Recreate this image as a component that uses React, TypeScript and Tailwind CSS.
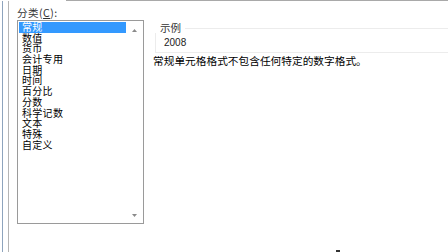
const items = [
  "常规",
  "数值",
  "货币",
  "会计专用",
  "日期",
  "时间",
  "百分比",
  "分数",
  "科学记数",
  "文本",
  "特殊",
  "自定义",
];

const cjk = { fontFamily: '"Noto Sans CJK SC", "Noto Sans", sans-serif' };

export default function App() {
  return (
    <div
      className="relative flex h-[252px] w-[448px] flex-col overflow-hidden bg-white text-[#1a1a1a]"
      style={cjk}
    >
      {/* top edge of the tab page */}
      <div className="ml-[66px] h-px shrink-0 bg-[#a9a9a9]" />

      <div className="flex flex-1">
        {/* dialog frame edges */}
        <div className="ml-[2px] w-px bg-[#8ea4bd]" />
        <div className="ml-[5px] w-px bg-[#b5b5b5]" />

        <div className="ml-[8px] flex flex-col pt-[6px]">
          <div className="h-[12px] text-[10.5px] leading-[12px] tracking-[0.5px] text-[#333]">
            分类(<span className="underline">C</span>):
          </div>
          <div className="mt-[1px] flex h-[204px] w-[127px] border border-[#9a9a9a] p-px">
            <div className="flex flex-1 flex-col">
              {items.map((item, i) => (
                <div
                  key={item}
                  className={
                    "h-[10.7px] pl-[3px] text-[10px] leading-[10.7px] tracking-[0.3px] " +
                    (i === 0 ? "bg-[#3399ff] text-white" : "text-black")
                  }
                >
                  {item}
                </div>
              ))}
            </div>
            <div className="flex w-[16px] flex-col items-center justify-between pb-[5px] pt-[7px]">
              <svg width="5" height="3" viewBox="0 0 5 3">
                <path d="M2.5 0 L5 3 L0 3 Z" fill="#8a8a8a" />
              </svg>
              <svg width="5" height="3" viewBox="0 0 5 3">
                <path d="M0 0 L5 0 L2.5 3 Z" fill="#8a8a8a" />
              </svg>
            </div>
          </div>
        </div>

        <div className="ml-[9px] flex flex-1 flex-col pt-[21px]">
          <div className="ml-[2px] flex flex-col">
            <div className="flex items-center">
              <span className="pl-[5px] pr-[4px] text-[10.5px] leading-[11px] text-[#333]">示例</span>
              <div className="h-px flex-1 translate-y-[1px] bg-[#ececec]" />
            </div>
            <div className="flex h-[20px] items-center border-b border-l border-[#ececec] pl-[8px]">
              <span
                className="text-[10px] leading-[10px] text-[#222]"
                style={{ fontFamily: '"Liberation Sans", Arial, sans-serif' }}
              >
                2008
              </span>
            </div>
          </div>
          <div className="mt-[2px] text-[10.7px] leading-[12px] text-black">
            常规单元格格式不包含任何特定的数字格式。
          </div>
        </div>
      </div>

      {/* stray cursor mark */}
      <div className="absolute left-[336px] top-[250px] h-[2px] w-[4px] bg-[#333]" />
    </div>
  );
}
